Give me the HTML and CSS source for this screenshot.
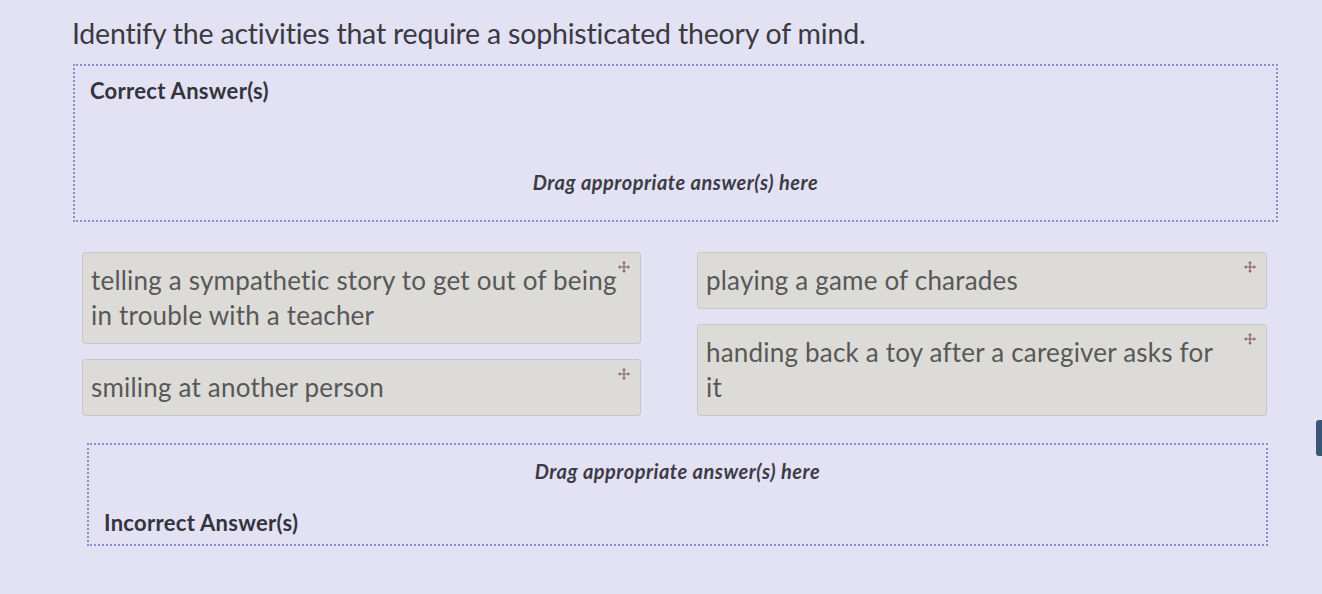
FILE: index.html
```html
<!DOCTYPE html>
<html>
  <head>
    <title>Drag and Drop Question</title>
    <meta charset="UTF-8" />
    <link rel="stylesheet" href="styles.css">
  </head>

  <body>
    <div class="question">
      <h1 class="prompt">Identify the activities that require a sophisticated theory of mind.</h1>

      <div class="dropzone dropzone-correct">
        <div class="zone-label">Correct Answer(s)</div>
        <div class="zone-hint">Drag appropriate answer(s) here</div>
      </div>

      <div class="choices">
        <div class="column column-left">
          <div class="choice">
            telling a sympathetic story to get out of being in trouble with a teacher
            <svg class="grip" viewBox="0 0 12 12"><path d="M6 0L4 2.3H5.4V5.4H2.3V4L0 6L2.3 8V6.6H5.4V9.7H4L6 12L8 9.7H6.6V6.6H9.7V8L12 6L9.7 4V5.4H6.6V2.3H8Z" /></svg>
          </div>
          <div class="choice">
            smiling at another person
            <svg class="grip" viewBox="0 0 12 12"><path d="M6 0L4 2.3H5.4V5.4H2.3V4L0 6L2.3 8V6.6H5.4V9.7H4L6 12L8 9.7H6.6V6.6H9.7V8L12 6L9.7 4V5.4H6.6V2.3H8Z" /></svg>
          </div>
        </div>
        <div class="column column-right">
          <div class="choice">
            playing a game of charades
            <svg class="grip" viewBox="0 0 12 12"><path d="M6 0L4 2.3H5.4V5.4H2.3V4L0 6L2.3 8V6.6H5.4V9.7H4L6 12L8 9.7H6.6V6.6H9.7V8L12 6L9.7 4V5.4H6.6V2.3H8Z" /></svg>
          </div>
          <div class="choice">
            handing back a toy after a caregiver asks for it
            <svg class="grip" viewBox="0 0 12 12"><path d="M6 0L4 2.3H5.4V5.4H2.3V4L0 6L2.3 8V6.6H5.4V9.7H4L6 12L8 9.7H6.6V6.6H9.7V8L12 6L9.7 4V5.4H6.6V2.3H8Z" /></svg>
          </div>
        </div>
      </div>

      <div class="dropzone dropzone-incorrect">
        <div class="zone-hint">Drag appropriate answer(s) here</div>
        <div class="zone-label">Incorrect Answer(s)</div>
      </div>
    </div>
    <div class="side-tab"></div>
  </body>
</html>
```

FILE: styles.css
```css
* {
  box-sizing: border-box;
  margin: 0;
}

body {
  height: 100vh;
  background: #e3e1f4;
  font-family: "Lato", "Open Sans", sans-serif;
  color: #444;
  overflow: hidden;
  position: relative;
}

.question {
  padding: 14px 0 0 0;
}

.prompt {
  margin-left: 72px;
  font-size: 28.5px;
  font-weight: 400;
  line-height: 38px;
  color: #3a3a40;
  letter-spacing: -0.2px;
}

.dropzone {
  border: 2px dotted #8d8dcf;
  display: flex;
  flex-direction: column;
}

.dropzone-correct {
  margin: 12px 0 0 73px;
  width: 1205px;
  height: 158px;
  padding: 12px 15px 26px 15px;
}

.dropzone-incorrect {
  margin: 27px 0 0 87px;
  width: 1181px;
  height: 103px;
  padding: 14px 15px 8px 15px;
}

.zone-label {
  font-size: 22px;
  font-weight: 700;
  color: #34343c;
  line-height: 26px;
  letter-spacing: 0.3px;
}

.zone-hint {
  font-size: 20px;
  font-weight: 700;
  font-style: italic;
  color: #3c3c46;
  text-align: center;
  line-height: 24px;
  letter-spacing: 0.5px;
}

.dropzone-correct .zone-hint {
  margin-top: auto;
}

.dropzone-incorrect .zone-label {
  margin-top: auto;
}

.choices {
  display: flex;
  gap: 56px;
  margin: 30px 0 0 82px;
}

.column {
  display: flex;
  flex-direction: column;
  gap: 15px;
}

.column-left {
  width: 559px;
}

.column-right {
  width: 570px;
}

.choice {
  position: relative;
  background: #dddbd7;
  border: 1px solid #c9c7c2;
  border-radius: 3px;
  padding: 10px 20px 10px 8px;
  font-size: 26px;
  line-height: 35px;
  color: #585858;
  letter-spacing: 0.2px;
}

.column-right .choice {
  padding-right: 40px;
}

.grip {
  position: absolute;
  top: 8px;
  right: 10px;
  width: 12px;
  height: 12px;
  fill: #85605f;
}

.side-tab {
  position: absolute;
  right: 0;
  top: 420px;
  width: 6px;
  height: 36px;
  background: #3a5676;
  border-radius: 3px 0 0 3px;
}
```
